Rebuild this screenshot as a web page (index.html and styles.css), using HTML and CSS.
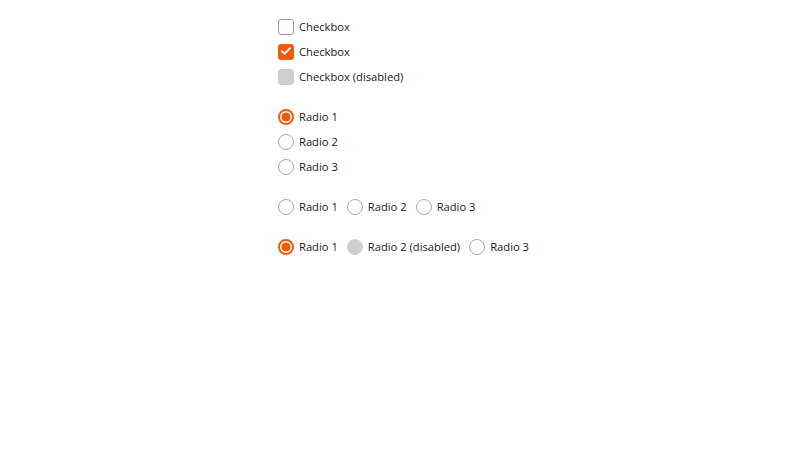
FILE: index.html
```html
<!DOCTYPE html>
<html>
<head>
<meta charset="utf-8">
<link rel="stylesheet" href="styles.css">
</head>
<body>
<main class="page">
  <section class="group stack">
    <label class="item"><span class="box"></span><span class="label">Checkbox</span></label>
    <label class="item"><span class="box checked"><svg viewBox="0 0 16 16" width="16" height="16"><path d="M4 8.3l2.6 2.6L12 5.2" fill="none" stroke="#fff" stroke-width="1.9" stroke-linecap="round" stroke-linejoin="round"/></svg></span><span class="label">Checkbox</span></label>
    <label class="item"><span class="box disabled"></span><span class="label">Checkbox (disabled)</span></label>
  </section>
  <section class="group stack">
    <label class="item"><span class="radio checked"></span><span class="label">Radio 1</span></label>
    <label class="item"><span class="radio"></span><span class="label">Radio 2</span></label>
    <label class="item"><span class="radio"></span><span class="label">Radio 3</span></label>
  </section>
  <section class="group inline">
    <label class="item"><span class="radio"></span><span class="label">Radio 1</span></label>
    <label class="item"><span class="radio"></span><span class="label">Radio 2</span></label>
    <label class="item"><span class="radio"></span><span class="label">Radio 3</span></label>
  </section>
  <section class="group inline">
    <label class="item"><span class="radio checked"></span><span class="label">Radio 1</span></label>
    <label class="item"><span class="radio disabled"></span><span class="label">Radio 2 (disabled)</span></label>
    <label class="item"><span class="radio"></span><span class="label">Radio 3</span></label>
  </section>
</main>
</body>
</html>
```
FILE: styles.css
```css
html, body {
  margin: 0;
  padding: 0;
  background: #fff;
}
body {
  font-family: "Open Sans", "Noto Sans", sans-serif;
  font-size: 11.2px;
  color: #1a1a1a;
}
.page {
  width: 244px;
  margin: 0 auto;
  padding-top: 14px;
  display: flex;
  flex-direction: column;
  gap: 15px;
}
.group.stack {
  display: flex;
  flex-direction: column;
}
.group.inline {
  display: flex;
  flex-direction: row;
  gap: 9px;
}
.item {
  display: flex;
  align-items: center;
  gap: 5px;
  height: 25px;
}
.box {
  width: 16px;
  height: 16px;
  box-sizing: border-box;
  border: 1.5px solid #9a9a9a;
  border-radius: 3px;
  display: flex;
}
.box.checked {
  background: #f25a0a;
  border-color: #f25a0a;
}
.box.checked svg {
  margin: -1.5px;
}
.box.disabled {
  background: #cfcfcf;
  border-color: #cfcfcf;
}
.radio {
  width: 16px;
  height: 16px;
  box-sizing: border-box;
  border: 1.5px solid #a8a8a8;
  border-radius: 50%;
}
.radio.checked {
  border: 2px solid #f25a0a;
  background: radial-gradient(circle, #f25a0a 0 4.2px, #fff 4.8px);
}
.radio.disabled {
  background: #cfcfcf;
  border-color: #cfcfcf;
}
.label {
  white-space: nowrap;
}
```
